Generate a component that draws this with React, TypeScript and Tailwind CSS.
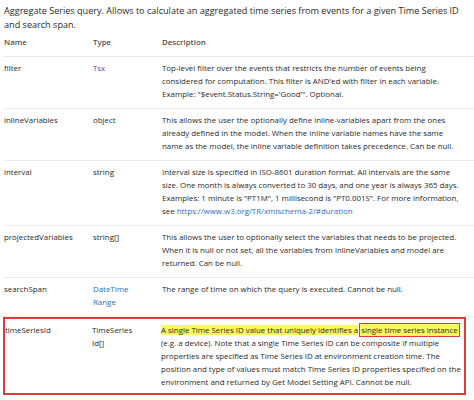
const rows = [
  {
    name: "filter",
    type: <span className="text-[#7a3d9f]">Tsx</span>,
    desc: (
      <>
        Top-level filter over the events that restricts the number of events being considered for
        computation. This filter is AND'ed with filter in each variable. Example: "$event.Status.String='Good'".
        Optional.
      </>
    ),
  },
  {
    name: "inlineVariables",
    type: "object",
    desc: (
      <>
        This allows the user the optionally define inline-variables apart from the ones already defined in the
        model. When the inline variable names have the same name as the model, the inline variable definition
        takes precedence. Can be null.
      </>
    ),
  },
  {
    name: "interval",
    type: "string",
    desc: (
      <>
        Interval size is specified in ISO-8601 duration format. All intervals are the same size. One month is
        always converted to 30 days, and one year is always 365 days. Examples: 1 minute is "PT1M", 1
        millisecond is "PT0.001S". For more information, see{" "}
        <a href="#" className="text-[#1f6fc5]">
          https://www.w3.org/TR/xmlschema-2/#duration
        </a>
      </>
    ),
  },
  {
    name: "projectedVariables",
    type: "string[]",
    desc: (
      <>
        This allows the user to optionally select the variables that needs to be projected. When it is null or
        not set, all the variables from inlineVariables and model are returned. Can be null.
      </>
    ),
  },
  {
    name: "searchSpan",
    type: <span className="text-[#1f6fc5]">DateTime Range</span>,
    desc: <>The range of time on which the query is executed. Cannot be null.</>,
  },
];

export default function App() {
  return (
    <div className="w-[474px] h-[400px] overflow-hidden bg-white pl-[3px] pt-[4px] text-[7.9px] leading-[13px] text-[#2a2a2a] font-['Open_Sans',sans-serif]">
      <p className="pl-[1px] pr-[6px] text-[9.1px] leading-[13.5px]">
        Aggregate Series query. Allows to calculate an aggregated time series from events for a given Time Series
        ID and search span.
      </p>

      <div className="mt-[5px]">
        {/* header */}
        <div className="grid grid-cols-[89px_69px_1fr] pl-[1px] pb-[7px] border-b border-[#e9e9e9] font-semibold text-[#505050]">
          <div>Name</div>
          <div>Type</div>
          <div>Description</div>
        </div>

        {rows.map((r) => (
          <div
            key={r.name}
            className="grid grid-cols-[89px_69px_1fr] pl-[1px] pt-[5px] pb-[7px] border-b border-[#ededed]"
          >
            <div>{r.name}</div>
            <div className="pr-[20px]">{r.type}</div>
            <div className="pr-[8px]">{r.desc}</div>
          </div>
        ))}

        {/* highlighted row */}
        <div className="grid grid-cols-[87px_69px_1fr] mr-[8px] pt-[5px] pb-[4px] border-2 border-[#e03b3b]">
          <div>timeSeriesId</div>
          <div className="pr-[20px]">TimeSeries Id[]</div>
          <div>
            <span className="bg-[#fbf85c]">A single Time Series ID value that uniquely identifies a</span>{" "}
            <span className="bg-[#fbf85c] px-[1px] py-[1px] outline outline-1 outline-[#e03b3b]">
              single time series instance
            </span>{" "}
            (e.g. a device). Note that a single Time Series ID can be composite if multiple properties are specified
            as Time Series ID at environment creation time. The position and type of values must match Time Series
            ID properties specified on the environment and returned by Get Model Setting API. Cannot be null.
          </div>
        </div>
      </div>
    </div>
  );
}
